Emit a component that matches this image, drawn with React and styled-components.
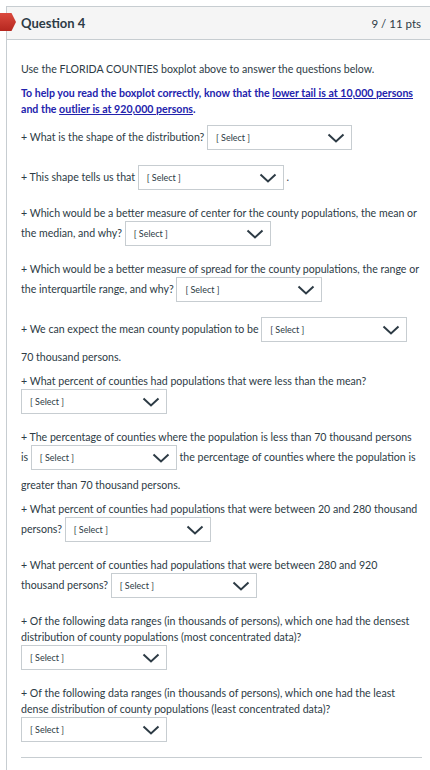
import React from 'react'
import styled, { createGlobalStyle } from 'styled-components'

const GlobalStyle = createGlobalStyle`
  html, body {
    margin: 0;
    padding: 0;
    overflow: hidden;
    background: #fff;
  }
  body {
    font-family: Lato, 'Noto Sans', sans-serif;
    color: #2d3b45;
  }
`

const Page = styled.div`
  padding: 6px 0 0 6px;
  width: 446px;
`

const Card = styled.section`
  position: relative;
  box-sizing: border-box;
  width: 431px;
  min-height: 800px;
  border: 1px solid #c7cdd1;
  border-bottom: none;
`

const Header = styled.header`
  box-sizing: border-box;
  height: 33px;
  display: flex;
  align-items: center;
  justify-content: space-between;
  padding: 0 15px 0 14px;
  background: #f5f5f5;
  border-bottom: 1px solid #c7cdd1;
`

const Flag = styled.div`
  position: absolute;
  left: -7px;
  top: 6px;
  width: 16px;
  height: 18px;
  background: linear-gradient(#db4a3e, #b5271f);
  clip-path: polygon(0 0, 72% 0, 100% 50%, 72% 100%, 0 100%);
`

const Title = styled.h2`
  margin: 0;
  font-size: 13px;
  font-weight: 700;
  color: #2d3b45;
`

const Points = styled.span`
  font-size: 11.5px;
  color: #2d3b45;
`

const Body = styled.div`
  padding: 21px 16px 0 14px;
`

const Para = styled.p`
  margin: 0 0 8px;
  font-size: 10.6px;
  line-height: 16px;
  color: ${p => (p.$blue ? '#2323ad' : '#2d3b45')};
  font-weight: ${p => (p.$blue ? 700 : 400)};
`

const Under = styled.span`
  text-decoration: underline;
`

const Select = styled.span`
  display: inline-flex;
  align-items: center;
  justify-content: space-between;
  box-sizing: border-box;
  width: ${p => p.$w || 146}px;
  height: 25px;
  margin-bottom: 7px;
  padding: 0 6px 0 8px;
  border: 1px solid #c7cdd1;
  background: #fff;
  vertical-align: baseline;
  font-size: 9px;
  color: #2d3b45;
`

const Chevron = () => (
  <svg width="18" height="10" viewBox="0 0 18 10">
    <path d="M1.5 1.5 L9 8.5 L16.5 1.5" fill="none" stroke="#2d3b45" strokeWidth="2" />
  </svg>
)

const Dropdown = ({ w }) => (
  <Select $w={w}>
    <span>[ Select ]</span>
    <Chevron />
  </Select>
)

const Divider = styled.div`
  margin: 8px -2px 0 0;
  border-top: 1px solid #c7cdd1;
`

export default function App() {
  return (
    <Page>
      <GlobalStyle />
      <Card>
        <Flag />
        <Header>
          <Title>Question 4</Title>
          <Points>9 / 11 pts</Points>
        </Header>
        <Body>
          <Para>Use the FLORIDA COUNTIES boxplot above to answer the questions below.</Para>
          <Para $blue>
            To help you read the boxplot correctly, know that the{' '}
            <Under>lower tail is at 10,000 persons</Under> and the{' '}
            <Under>outlier is at 920,000 persons</Under>.
          </Para>
          <Para>
            + What is the shape of the distribution? <Dropdown w={145} />
          </Para>
          <Para>
            + This shape tells us that <Dropdown /> .
          </Para>
          <Para>
            + Which would be a better measure of center for the county populations, the mean or
            the median, and why? <Dropdown />
          </Para>
          <Para>
            + Which would be a better measure of spread for the county populations, the range or
            the interquartile range, and why? <Dropdown />
          </Para>
          <Para>
            + We can expect the mean county population to be <Dropdown /> 70 thousand persons.
          </Para>
          <Para>
            + What percent of counties had populations that were less than the mean? <Dropdown />
          </Para>
          <Para>
            + The percentage of counties where the population is less than 70 thousand persons
            is <Dropdown /> the percentage of counties where the population is greater than 70
            thousand persons.
          </Para>
          <Para>
            + What percent of counties had populations that were between 20 and 280 thousand
            persons? <Dropdown />
          </Para>
          <Para>
            + What percent of counties had populations that were between 280 and 920 thousand
            persons? <Dropdown />
          </Para>
          <Para>
            + Of the following data ranges (in thousands of persons), which one had the densest
            distribution of county populations (most concentrated data)? <Dropdown />
          </Para>
          <Para>
            + Of the following data ranges (in thousands of persons), which one had the least
            dense distribution of county populations (least concentrated data)? <Dropdown />
          </Para>
          <Divider />
        </Body>
      </Card>
    </Page>
  )
}
